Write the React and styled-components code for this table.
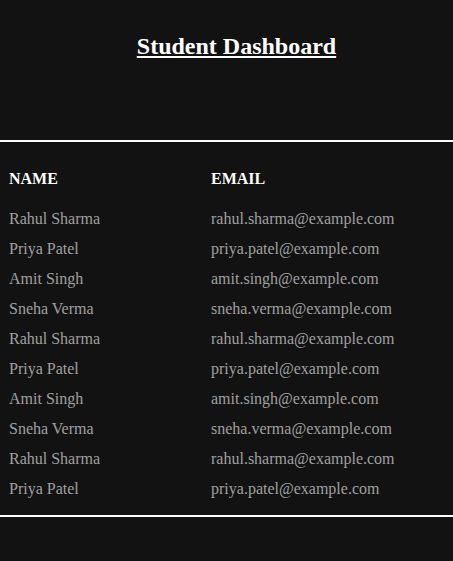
import React from "react";
import styled, { createGlobalStyle } from "styled-components";

const Global = createGlobalStyle`
  html, body { margin: 0; padding: 0; background: #121212; }
  body { font-family: "Liberation Serif", "Times New Roman", serif; color: #fff; }
`;

const Page = styled.div`
  min-height: 561px;
  background: #121212;
`;

const Header = styled.header`
  height: 140px;
  display: flex;
  justify-content: center;
  align-items: flex-start;
  padding-left: 20px;
  border-bottom: 2px solid #fff;
`;

const Title = styled.h1`
  margin: 33px 0 0;
  font-size: 24px;
  font-weight: bold;
  text-decoration: underline;
  color: #fff;
`;

const Table = styled.div`
  display: grid;
  grid-template-columns: 202px 1fr;
  padding: 28px 0 5px 9px;
  border-bottom: 2px solid #fff;
`;

const HeadCell = styled.div`
  font-size: 16px;
  font-weight: bold;
  line-height: 18px;
  color: #fff;
  padding-bottom: 22px;
`;

const Cell = styled.div`
  font-size: 16px;
  line-height: 18px;
  height: 30px;
  color: #a0a0a0;
`;

const rows = [
  ["Rahul Sharma", "rahul.sharma@example.com"],
  ["Priya Patel", "priya.patel@example.com"],
  ["Amit Singh", "amit.singh@example.com"],
  ["Sneha Verma", "sneha.verma@example.com"],
  ["Rahul Sharma", "rahul.sharma@example.com"],
  ["Priya Patel", "priya.patel@example.com"],
  ["Amit Singh", "amit.singh@example.com"],
  ["Sneha Verma", "sneha.verma@example.com"],
  ["Rahul Sharma", "rahul.sharma@example.com"],
  ["Priya Patel", "priya.patel@example.com"],
];

export default function App() {
  return (
    <Page>
      <Global />
      <Header>
        <Title>Student Dashboard</Title>
      </Header>
      <Table>
        <HeadCell>NAME</HeadCell>
        <HeadCell>EMAIL</HeadCell>
        {rows.map(([n, e], i) => (
          <React.Fragment key={i}>
            <Cell>{n}</Cell>
            <Cell>{e}</Cell>
          </React.Fragment>
        ))}
      </Table>
    </Page>
  );
}
